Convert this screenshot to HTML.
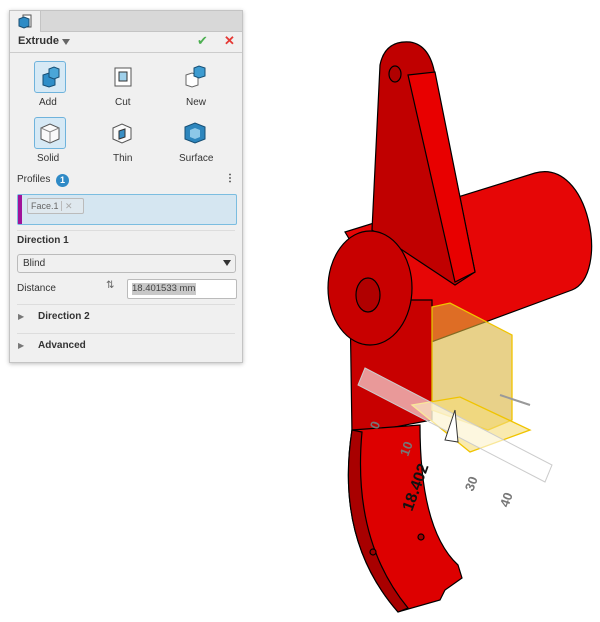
<!DOCTYPE html>
<html><head><style>
body{margin:0;width:600px;height:622px;background:#fff;font-family:"Liberation Sans",sans-serif;position:relative;overflow:hidden}
.p{position:absolute;left:9px;top:10px;width:232px;height:351px;background:#f0f0f0;border:1px solid #c4c4c4;box-shadow:0 1px 4px rgba(0,0,0,.25)}
.a{position:absolute;font-size:10px;color:#333;white-space:nowrap}
.b{font-weight:bold}
.ic{position:absolute;width:30px;height:30px}
.sel{border:1px solid #6fb3dc;background:#d6e9f5;border-radius:3px}
</style></head><body>
<div class="p">
 <div style="position:absolute;left:0;top:0;width:232px;height:20px;background:#d8d8d8;border-bottom:1px solid #c4c4c4"></div>
 <div style="position:absolute;left:0;top:0;width:30px;height:21px;background:#f0f0f0;border-right:1px solid #c4c4c4"></div>
 <svg style="position:absolute;left:7px;top:3px" width="16" height="16"><rect x="6" y="1" width="8" height="12" fill="#fff" stroke="#555"/><path d="M2 5l5-2 5 2v7l-5 2-5-2z" fill="#2d8bc5" stroke="#1a4d70"/></svg>
 <div class="a b" style="left:8px;top:24px;font-size:11px">Extrude</div>
 <div style="position:absolute;left:52px;top:28px;border:4px solid transparent;border-top:6px solid #666"></div>
 <div class="a" style="left:187px;top:22px;color:#4caf50;font-size:13px">✔</div>
 <div class="a" style="left:214px;top:22px;color:#e53935;font-size:13px;font-weight:bold">✕</div>
 <div style="position:absolute;left:0;top:41px;width:232px;border-top:1px solid #ccc"></div>
 <div class="ic sel" style="left:24px;top:50px"></div>
 <svg style="position:absolute;left:30px;top:55px" width="22" height="22"><path d="M3 9l6-2 6 2v10l-6 2-6-2z" fill="#2f8ec8" stroke="#164f75"/><path d="M9 3l5-2 5 2v8l-5 2-5-2z" fill="#4aa6d8" stroke="#164f75"/></svg>
 <svg style="position:absolute;left:103px;top:55px" width="20" height="22"><rect x="2" y="2" width="16" height="18" fill="#fff" stroke="#555"/><rect x="6" y="6" width="8" height="9" fill="#9fd0ea" stroke="#333"/></svg>
 <svg style="position:absolute;left:174px;top:54px" width="24" height="24"><path d="M2 10l6-2 6 2v10l-6 2-6-2z" fill="#fff" stroke="#666"/><path d="M10 3l5-2 6 2v8l-6 2-5-2z" fill="#3d9bd0" stroke="#164f75"/></svg>
 <div class="a" style="left:29px;top:86px">Add</div>
 <div class="a" style="left:105px;top:86px">Cut</div>
 <div class="a" style="left:176px;top:86px">New</div>
 <div class="ic sel" style="left:24px;top:106px"></div>
 <svg style="position:absolute;left:29px;top:111px" width="22" height="22"><path d="M2 6l9-4 9 4v11l-9 4-9-4z" fill="#fafafa" stroke="#555"/><path d="M2 6l9 4 9-4M11 10v11" fill="none" stroke="#888"/></svg>
 <svg style="position:absolute;left:101px;top:111px" width="22" height="22"><path d="M2 6l9-4 9 4v11l-9 4-9-4z" fill="#fafafa" stroke="#555"/><path d="M8 9l6-2v8l-6 2z" fill="#3a8fc4" stroke="#333"/></svg>
 <svg style="position:absolute;left:173px;top:110px" width="24" height="24"><path d="M2 6l10-4 10 4v12l-10 4-10-4z" fill="#2d86bd" stroke="#164f75"/><path d="M7 9l5-2 5 2v7l-5 2-5-2z" fill="#8cc8e8"/></svg>
 <div class="a" style="left:27px;top:142px">Solid</div>
 <div class="a" style="left:103px;top:142px">Thin</div>
 <div class="a" style="left:169px;top:142px">Surface</div>
 <div class="a" style="left:7px;top:163px">Profiles</div>
 <div style="position:absolute;left:46px;top:163px;width:13px;height:13px;border-radius:50%;background:#2f8ac6;color:#fff;font-size:9px;font-weight:bold;text-align:center;line-height:13px">1</div>
 <div class="a" style="left:215px;top:162px;font-weight:bold">⋮</div>
 <div style="position:absolute;left:7px;top:183px;width:218px;height:29px;background:#d5e6f1;border:1px solid #7bbde0;border-radius:2px"></div>
 <div style="position:absolute;left:8px;top:184px;width:4px;height:29px;background:#a0129a"></div>
 <div style="position:absolute;left:17px;top:187px;width:52px;height:14px;border:1px solid #bbb;background:#dfe8ee;border-radius:2px;font-size:9px;color:#666;line-height:14px;padding-left:3px;white-space:nowrap">Face.1 <span style="color:#aaa;border-left:1px solid #bbb;padding-left:3px">✕</span></div>
 <div style="position:absolute;left:7px;top:219px;width:218px;border-top:1px solid #ddd"></div>
 <div class="a b" style="left:7px;top:224px">Direction 1</div>
 <div style="position:absolute;left:7px;top:243px;width:212px;height:17px;border:1px solid #bbb;border-radius:3px;background:#f0f0f0;font-size:10px;color:#333;line-height:17px;padding-left:5px">Blind</div>
 <div style="position:absolute;left:213px;top:249px;border:4px solid transparent;border-top:6px solid #333"></div>
 <div class="a" style="left:7px;top:272px">Distance</div>
 <div class="a" style="left:96px;top:269px;color:#666">⇅</div>
 <div style="position:absolute;left:117px;top:268px;width:108px;height:18px;border:1px solid #bbb;border-radius:2px;background:#fff"></div>
 <div style="position:absolute;left:122px;top:272px;width:64px;height:12px;background:#c8c8c8;font-size:9.5px;color:#444;line-height:12px;white-space:nowrap">18.401533 mm</div>
 <div style="position:absolute;left:7px;top:293px;width:218px;border-top:1px solid #ddd"></div>
 <div class="a" style="left:8px;top:301px;font-size:8px;color:#777">▶</div>
 <div class="a b" style="left:28px;top:300px">Direction 2</div>
 <div style="position:absolute;left:7px;top:322px;width:218px;border-top:1px solid #ddd"></div>
 <div class="a" style="left:8px;top:330px;font-size:8px;color:#777">▶</div>
 <div class="a b" style="left:28px;top:329px">Advanced</div>
</div>
<svg style="position:absolute;left:0;top:0" width="600" height="622">
 <g stroke="#000" stroke-width="1.2">
  <!-- cylinder body -->
  <path d="M345 232 L535 173 C 590 158, 610 275, 572 290 L415 348 z" fill="#e60606"/>
  <!-- lower plate -->
  <path d="M350 300 L432 300 L432 420 L352 435z" fill="#c80000"/>
  <!-- arc band -->
  <path d="M352 430 Q335 540 398 612 L440 600 L445 590 L462 578 L458 565 Q420 530 420 425z" fill="#dd0000"/>
  <path d="M352 430 Q335 540 398 612 L408 608 Q352 540 362 432z" fill="#a80000"/>
  <!-- arm -->
  <path d="M380 65 Q385 40 410 42 Q430 45 435 75 L475 272 L455 285 L372 230z" fill="#c00000"/>
  <path d="M408 75 L435 72 L475 272 L455 282z" fill="#e80000"/>
  <!-- left face -->
  <ellipse cx="370" cy="288" rx="42" ry="57" fill="#c80000"/>
  <ellipse cx="368" cy="295" rx="12" ry="17" fill="#b00000"/>
  <ellipse cx="395" cy="74" rx="6" ry="8" fill="#b00000"/>
  <circle cx="373" cy="552" r="3" fill="#900"/>
  <circle cx="421" cy="537" r="3" fill="#900"/>
 </g>
 <g fill="#d9b23a" fill-opacity=".6" stroke="#f0c400" stroke-width="1.3">
  <path d="M432 307 L450 303 L512 335 L512 420 L488 430 L432 410z"/>
  <path d="M412 405 L460 397 L530 430 L470 452z" fill="#f5dc7a"/>
 </g>
 <path d="M365 368 L552 465 L545 482 L358 385z" fill="#fff" fill-opacity=".6" stroke="#ccc"/>
 <path d="M445 440 L455 410 L458 442z" fill="#fff" stroke="#333"/>
 <path d="M500 395 L530 405" stroke="#999" stroke-width="2"/>
 <g font-family="Liberation Sans" font-weight="bold" font-size="13" fill="#777">
  <text x="378" y="430" transform="rotate(-70 378 430)">0</text>
  <text x="408" y="457" transform="rotate(-70 408 457)">10</text>
  <text x="412" y="512" transform="rotate(-70 412 512)" font-size="16" fill="#111">18.402</text>
  <text x="473" y="492" transform="rotate(-70 473 492)">30</text>
  <text x="508" y="508" transform="rotate(-70 508 508)">40</text>
 </g>
</svg>
</body></html>
